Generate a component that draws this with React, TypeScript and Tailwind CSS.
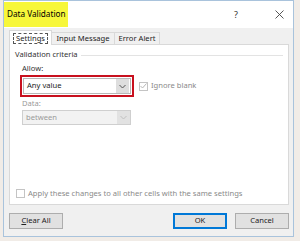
import React from "react";

const font = { fontFamily: '"Noto Sans", "Liberation Sans", sans-serif' };

function Chevron({ color = "#555" }: { color?: string }) {
  return (
    <svg width="7" height="5" viewBox="0 0 7 5">
      <path d="M0.5 1 L3.5 4 L6.5 1" fill="none" stroke={color} strokeWidth="1" />
    </svg>
  );
}

export default function App() {
  return (
    <div className="w-[300px] h-[241px] bg-[#f1ece7] overflow-hidden" style={font}>
      <div className="ml-[3px] w-[291px] h-[237px] border border-[#a9c3dc] bg-[#f0f0f0] flex flex-col text-[7.6px] text-[#222]">
        {/* title bar */}
        <div className="h-[27px] bg-white flex items-start shrink-0">
          <div className="mt-[1px] w-[64px] h-[25px] bg-[#f7f73a] flex items-center pl-[3px] text-[8.2px] text-black">
            Data Validation
          </div>
          <div className="flex-1" />
          <div className="h-[27px] flex items-center text-[9px] text-[#333] mr-[37px]">?</div>
          <div className="h-[27px] flex items-center mr-[9px]">
            <svg width="9" height="9" viewBox="0 0 9 9">
              <path d="M0.5 0.5 L8.5 8.5 M8.5 0.5 L0.5 8.5" stroke="#444" strokeWidth="0.9" />
            </svg>
          </div>
        </div>
        {/* tabs */}
        <div className="flex items-end pl-[5px] mt-[2px] h-[15px] shrink-0 relative z-10">
          <div className="w-[43px] h-[15px] bg-white border border-[#d9d9d9] border-b-0 flex items-center justify-center">
            <span className="border border-dashed border-[#555] px-[2px] leading-[9px]">Settings</span>
          </div>
          <div className="w-[63px] h-[13px] bg-[#f0f0f0] border border-[#d9d9d9] border-l-0 flex items-center justify-center">
            Input Message
          </div>
          <div className="w-[45px] h-[13px] bg-[#f0f0f0] border border-[#d9d9d9] border-l-0 flex items-center justify-center">
            Error Alert
          </div>
        </div>
        {/* panel */}
        <div className="ml-[5px] w-[280px] h-[161px] -mt-[1px] bg-white border border-[#d9d9d9] flex flex-col shrink-0">
          <div className="flex items-center mt-[4px] pl-[5px] pr-[5px] h-[12px]">
            <span className="text-[#333]">Validation criteria</span>
            <div className="flex-1 h-px bg-[#e3e3e3] ml-[3px]" />
          </div>
          <div className="pl-[12px] mt-[3px] h-[10px] flex items-center text-[#333]">Allow:</div>
          <div className="flex items-center mt-[1px] pl-[10px]">
            <div className="w-[114px] h-[22px] border-2 border-[#c8101e] p-[1px]">
              <div className="h-full border border-[#b8b8b8] bg-white flex items-center pl-[3px] pr-[1px]">
                <span className="flex-1 text-[#222]">Any value</span>
                <div className="w-[13px] h-[14px] bg-[#dedede] flex items-center justify-center">
                  <Chevron />
                </div>
              </div>
            </div>
            <div className="ml-[5px] w-[9px] h-[9px] border border-[#c4c4c4] flex items-center justify-center">
              <svg width="7" height="6" viewBox="0 0 7 6">
                <path d="M0.5 3 L2.5 5 L6.5 0.5" fill="none" stroke="#b8b8b8" strokeWidth="1" />
              </svg>
            </div>
            <span className="ml-[3px] text-[#8a8a8a]">Ignore blank</span>
          </div>
          <div className="pl-[12px] mt-[2px] h-[10px] flex items-center text-[#9a9a9a]">Data:</div>
          <div className="ml-[12px] mt-[1px] w-[109px] h-[15px] border border-[#cfcfcf] bg-[#f2f2f2] flex items-center pl-[3px]">
            <span className="flex-1 text-[#9a9a9a]">between</span>
            <div className="w-[13px] h-[13px] bg-[#e2e2e2] flex items-center justify-center">
              <Chevron color="#c0c0c0" />
            </div>
          </div>
          <div className="flex-1" />
          <div className="flex items-center pl-[6px] mb-[5px]">
            <div className="w-[9px] h-[9px] border border-[#c4c4c4] bg-white" />
            <span className="ml-[3px] text-[#8a8a8a]">Apply these changes to all other cells with the same settings</span>
          </div>
        </div>
        {/* buttons */}
        <div className="flex items-center pl-[5px] mt-[8px] h-[16px]">
          <div className="w-[54px] h-[16px] bg-[#e1e1e1] border border-[#adadad] flex items-center justify-center">
            <span><span className="underline">C</span>lear All</span>
          </div>
          <div className="flex-1" />
          <div className="w-[54px] h-[16px] bg-[#e1e1e1] border-2 border-[#0078d7] flex items-center justify-center">OK</div>
          <div className="ml-[8px] mr-[4px] w-[54px] h-[16px] bg-[#e1e1e1] border border-[#adadad] flex items-center justify-center">Cancel</div>
        </div>
      </div>
    </div>
  );
}
